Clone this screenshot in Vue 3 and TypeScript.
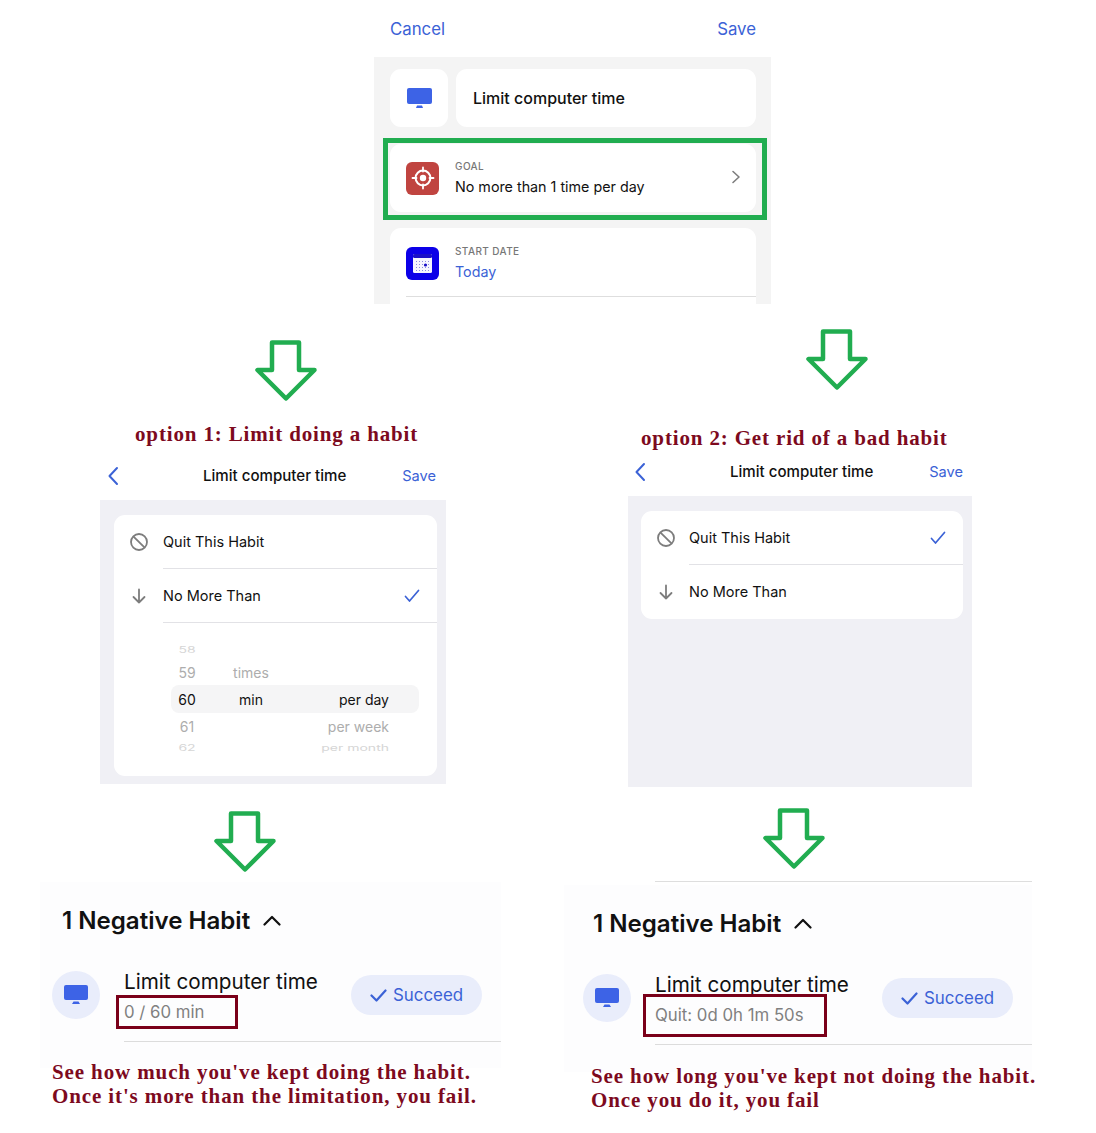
<script setup lang="ts">
// picker rows for option 1
const pickerRows = [
  { num: '58', unit: '', period: '', cls: 'far', h: 20 },
  { num: '59', unit: 'times', period: '', cls: 'near', h: 26 },
  { num: '60', unit: 'min', period: 'per day', cls: 'current', h: 28 },
  { num: '61', unit: '', period: 'per week', cls: 'near', h: 26 },
  { num: '62', unit: '', period: 'per month', cls: 'far', h: 16 },
]

const arrows = ['a1', 'a2', 'a3', 'a4']

const habits = [
  {
    cls: 'habit-1',
    sub: '0 / 60 min',
    caption: ["See how much you've kept doing the habit.", "Once it's more than the limitation, you fail."],
  },
  {
    cls: 'habit-2',
    sub: 'Quit: 0d 0h 1m 50s',
    caption: ["See how long you've kept not doing the habit.", 'Once you do it, you fail'],
  },
]
</script>

<template>
  <div class="canvas">
    <!-- top screenshot -->
    <section class="edit">
      <header class="edit-head">
        <span>Cancel</span>
        <span>Save</span>
      </header>
      <div class="edit-body">
        <div class="name-row">
          <div class="icon-tile">
            <svg width="25" height="20" viewBox="0 0 25 20">
              <rect x="0" y="0" width="25" height="16" rx="2" fill="#3d63e6" />
              <path d="M9 20 L10 17.500 H15 L16 20 Z" fill="#3d63e6" />
            </svg>
          </div>
          <div class="name-card">Limit computer time</div>
        </div>
        <div class="goal-card">
          <div class="tile tile-red">
            <svg width="24" height="24" viewBox="0 0 24 24" fill="none" stroke="#fff">
              <circle cx="12" cy="12" r="7.400" stroke-width="2" />
              <circle cx="12" cy="12" r="3.200" fill="#fff" stroke="none" />
              <path d="M12 1.500 V5.500 M12 18.500 V22.500 M1.500 12 H5.500 M18.500 12 H22.500" stroke-width="1.800" stroke-linecap="round" />
            </svg>
          </div>
          <div class="field">
            <div class="field-label">GOAL</div>
            <div class="field-value">No more than 1 time per day</div>
          </div>
          <svg class="goal-chevron" width="10" height="14" viewBox="0 0 10 14" fill="none">
            <path d="M2 1.500 L8 7 L2 12.500" stroke="#7d7d7d" stroke-width="1.600" stroke-linecap="round" stroke-linejoin="round" />
          </svg>
        </div>
        <div class="date-card">
          <div class="date-row">
            <div class="tile tile-blue">
              <svg width="21" height="21" viewBox="0 0 21 21">
                <rect x="1" y="1" width="19" height="19" rx="1.500" fill="#f6f6ff" />
                <rect x="1" y="1" width="19" height="4" rx="1.500" fill="#1a10c8" />
                <path d="M4 8.500 H18 M4 11.500 H18 M4 14.500 H18 M4 17.500 H18" stroke="#8c8ce0" stroke-width="1" stroke-dasharray="1 2" />
                <circle cx="13.500" cy="12" r="1.600" fill="#1a10c8" />
              </svg>
            </div>
            <div class="field">
              <div class="field-label wide">START DATE</div>
              <div class="field-value blue">Today</div>
            </div>
          </div>
          <div class="date-rule"></div>
        </div>
      </div>
      <div class="goal-mark"></div>
    </section>

    <!-- green arrows -->
    <svg v-for="a in arrows" :key="a" class="arrow" :class="a" width="62" height="61" viewBox="0 0 62 61" fill="none">
      <path d="M17 2.500 H44 V30 H59.500 L31 58.500 L2.500 30 H17 Z" stroke="#21ad50" stroke-width="4.500" stroke-linejoin="round" />
    </svg>

    <h2 class="note head-1">option 1: Limit doing a habit</h2>
    <h2 class="note head-2">option 2: Get rid of a bad habit</h2>

    <!-- option 1 -->
    <section class="option option-1">
      <header class="opt-head">
        <svg width="12" height="20" viewBox="0 0 12 20" fill="none">
          <path d="M10 2 L2.500 10 L10 18" stroke="#3b62d6" stroke-width="2" stroke-linecap="round" stroke-linejoin="round" />
        </svg>
        <span class="opt-title">Limit computer time</span>
        <span class="opt-save">Save</span>
      </header>
      <div class="opt-body">
        <div class="opt-card">
          <div class="opt-row">
            <svg class="opt-icon" width="20" height="20" viewBox="0 0 20 20" fill="none" stroke="#7d7d7d" stroke-width="1.800">
              <circle cx="10" cy="10" r="8" />
              <path d="M4.300 4.300 L15.700 15.700" />
            </svg>
            <div class="opt-main">Quit This Habit</div>
          </div>
          <div class="opt-row">
            <svg class="opt-icon" width="20" height="20" viewBox="0 0 20 20" fill="none" stroke="#7d7d7d" stroke-width="1.800" stroke-linecap="round" stroke-linejoin="round">
              <path d="M10 3.500 V16.500 M4.500 11 L10 16.500 L15.500 11" />
            </svg>
            <div class="opt-main">
              No More Than
              <svg width="16" height="14" viewBox="0 0 16 14" fill="none">
                <path d="M1.500 7.500 L5.500 12 L14.500 1.500" stroke="#3b62d6" stroke-width="1.700" stroke-linecap="round" stroke-linejoin="round" />
              </svg>
            </div>
          </div>
          <div class="picker">
            <div
              v-for="row in pickerRows"
              :key="row.num"
              class="pick-row"
              :class="row.cls"
              :style="{ height: row.h + 'px' }"
            >
              <span class="pick-num">{{ row.num }}</span>
              <span class="pick-unit">{{ row.unit }}</span>
              <span class="pick-period">{{ row.period }}</span>
            </div>
          </div>
        </div>
      </div>
    </section>

    <!-- option 2 -->
    <section class="option option-2">
      <header class="opt-head">
        <svg width="12" height="20" viewBox="0 0 12 20" fill="none">
          <path d="M10 2 L2.500 10 L10 18" stroke="#3b62d6" stroke-width="2" stroke-linecap="round" stroke-linejoin="round" />
        </svg>
        <span class="opt-title">Limit computer time</span>
        <span class="opt-save">Save</span>
      </header>
      <div class="opt-body">
        <div class="opt-card">
          <div class="opt-row">
            <svg class="opt-icon" width="20" height="20" viewBox="0 0 20 20" fill="none" stroke="#7d7d7d" stroke-width="1.800">
              <circle cx="10" cy="10" r="8" />
              <path d="M4.300 4.300 L15.700 15.700" />
            </svg>
            <div class="opt-main">
              Quit This Habit
              <svg width="16" height="14" viewBox="0 0 16 14" fill="none">
                <path d="M1.500 7.500 L5.500 12 L14.500 1.500" stroke="#3b62d6" stroke-width="1.700" stroke-linecap="round" stroke-linejoin="round" />
              </svg>
            </div>
          </div>
          <div class="opt-row last">
            <svg class="opt-icon" width="20" height="20" viewBox="0 0 20 20" fill="none" stroke="#7d7d7d" stroke-width="1.800" stroke-linecap="round" stroke-linejoin="round">
              <path d="M10 3.500 V16.500 M4.500 11 L10 16.500 L15.500 11" />
            </svg>
            <div class="opt-main">No More Than</div>
          </div>
        </div>
      </div>
    </section>

    <!-- habit list results -->
    <template v-for="h in habits" :key="h.cls">
      <section class="habit" :class="h.cls">
        <div class="habit-head">
          1 Negative Habit
          <svg width="18" height="11" viewBox="0 0 18 11" fill="none">
            <path d="M1.500 9.500 L9 2 L16.500 9.500" stroke="#111" stroke-width="2.200" stroke-linecap="round" stroke-linejoin="round" />
          </svg>
        </div>
        <div class="habit-row">
          <div class="habit-icon">
            <svg width="24" height="20" viewBox="0 0 24 20">
              <rect x="0" y="0" width="24" height="15" rx="2" fill="#3d63e6" />
              <path d="M8 19 L9.500 16.500 H14.500 L16 19 Z" fill="#3d63e6" />
            </svg>
          </div>
          <div class="habit-text">
            <div class="habit-title">Limit computer time</div>
            <div class="habit-sub">{{ h.sub }}</div>
          </div>
          <div class="pill">
            <svg width="17" height="13" viewBox="0 0 17 13" fill="none">
              <path d="M1.500 6.500 L6.500 11.500 L15.500 1.500" stroke="#3b62d6" stroke-width="2.200" stroke-linecap="round" stroke-linejoin="round" />
            </svg>
            Succeed
          </div>
        </div>
        <div class="habit-rule"></div>
        <div class="red-box"></div>
      </section>
      <p class="note caption" :class="h.cls + '-cap'">
        <span v-for="line in h.caption" :key="line">{{ line }}</span>
      </p>
    </template>
  </div>
</template>

<style>
html,
body {
  background: #fff;
}
</style>

<style scoped>
.canvas {
  position: relative;
  width: 1096px;
  height: 1133px;
  overflow: hidden;
  background: #fff;
  font-family: Inter, "Liberation Sans", sans-serif;
  color: #111;
}

/* collage pieces */
.edit {
  position: absolute;
  left: 374px;
  top: 0;
  width: 397px;
  height: 304px;
  display: flex;
  flex-direction: column;
}

.edit-head {
  height: 57px;
  padding: 0 15px 0 16px;
  display: flex;
  align-items: center;
  justify-content: space-between;
  font-size: 16.800px;
  color: #3b62d6;
}

.edit-body {
  flex: 1;
  background: #f4f4f4;
  padding: 12px 15px 0 16px;
  display: flex;
  flex-direction: column;
  gap: 16px;
  overflow: hidden;
}

.name-row {
  display: flex;
  gap: 8px;
  height: 58px;
  margin-bottom: 1px;
}

.icon-tile {
  width: 58px;
  background: #fff;
  border-radius: 11px;
  display: flex;
  align-items: center;
  justify-content: center;
}

.name-card {
  flex: 1;
  background: #fff;
  border-radius: 11px;
  padding-left: 17px;
  display: flex;
  align-items: center;
  font-size: 16px;
  font-weight: 500;
}

.goal-card {
  height: 68px;
  background: #fff;
  border-radius: 11px;
  padding: 0 16px;
  display: flex;
  align-items: center;
  gap: 16px;
}

.tile {
  width: 33px;
  height: 33px;
  border-radius: 6px;
  display: flex;
  align-items: center;
  justify-content: center;
  flex: none;
}

.tile-red {
  background: #c04440;
}

.tile-blue {
  background: #0c00e8;
}

.field {
  flex: 1;
  display: flex;
  flex-direction: column;
  gap: 6px;
  margin-top: -1px;
}

.field-label {
  font-size: 10px;
  line-height: 12px;
  font-weight: 500;
  letter-spacing: 0.4px;
  color: #777;
}

.field-label.wide {
  letter-spacing: 0.4px;
}

.field-value {
  font-size: 14.300px;
  line-height: 17px;
  color: #111;
}

.field-value.blue {
  color: #3b62d6;
}

.goal-chevron {
  margin-right: -1px;
  margin-top: -2px;
}

.date-card {
  flex: 1;
  background: #fff;
  border-radius: 11px 11px 0 0;
  padding: 18px 0 0 16px;
}

.date-row {
  display: flex;
  align-items: center;
  gap: 16px;
}

.date-rule {
  margin-top: 16px;
  height: 1px;
  background: #dedede;
}

.goal-mark {
  position: absolute;
  left: 9px;
  top: 138px;
  width: 384px;
  height: 82px;
  box-sizing: border-box;
  border: 5px solid #21ad50;
}

.arrow {
  position: absolute;
}

.a1 { left: 255px; top: 340px; }
.a2 { left: 806px; top: 329px; }
.a3 { left: 214px; top: 811px; }
.a4 { left: 763px; top: 808px; }

.note {
  position: absolute;
  margin: 0;
  font-family: "Liberation Serif", serif;
  font-weight: 700;
  color: #7d0a1e;
  white-space: nowrap;
}

.head-1,
.head-2 {
  font-size: 21px;
  line-height: 24px;
  letter-spacing: 0.85px;
}

.head-1 { left: 135px; top: 422px; }
.head-2 { left: 641px; top: 426px; }

.option {
  position: absolute;
  display: flex;
  flex-direction: column;
}

.option-1 {
  left: 100px;
  top: 455px;
  width: 346px;
  height: 329px;
}

.option-2 {
  left: 628px;
  top: 451px;
  width: 344px;
  height: 336px;
}

.opt-head {
  height: 45px;
  flex: none;
  box-sizing: border-box;
  padding: 0 10px 4px 7px;
  display: flex;
  align-items: center;
  font-size: 14.600px;
}

.option-2 .opt-head {
  padding-left: 6px;
  padding-right: 9px;
}

.opt-title {
  flex: 1;
  text-align: center;
  font-weight: 500;
  font-size: 15.100px;
  padding-left: 28px;
}

.opt-save {
  color: #3b62d6;
}

.opt-body {
  flex: 1;
  background: #f0f0f5;
  padding: 15px 9px 8px 14px;
  display: flex;
  flex-direction: column;
  align-items: flex-start;
}

.option-2 .opt-body {
  padding-left: 13px;
}

.opt-card {
  width: 323px;
  box-sizing: border-box;
  background: #fff;
  border-radius: 11px;
  flex: 1;
  overflow: hidden;
}

.option-2 .opt-card {
  flex: none;
  width: 322px;
  height: 108px;
}

.opt-row {
  display: flex;
  align-items: stretch;
  height: 54px;
  padding-left: 15px;
  gap: 14px;
  font-size: 14.500px;
}

.option-2 .opt-row {
  gap: 13px;
}

.opt-icon {
  align-self: center;
  flex: none;
}

.opt-main {
  flex: 1;
  display: flex;
  align-items: center;
  justify-content: space-between;
  padding-right: 17px;
  border-bottom: 1px solid #e2e2e6;
}

.opt-row.last .opt-main {
  border-bottom: 0;
  padding-bottom: 1px;
}

.picker {
  margin: 16px 18px 0 57px;
}

.pick-row {
  display: flex;
  align-items: center;
  font-size: 14px;
}

.pick-row.current {
  background: #f5f5f6;
  border-radius: 8px;
  color: #111;
}

.pick-row.near {
  color: #adadad;
}

.pick-row.far {
  color: #d6d6d6;
  transform: scaleY(0.62);
}

.pick-num {
  width: 32px;
  text-align: center;
}

.pick-unit {
  width: 96px;
  text-align: center;
}

.pick-period {
  flex: 1;
  text-align: right;
  padding-right: 30px;
}

.habit {
  position: absolute;
  box-sizing: border-box;
  background: #fdfdfe;
  display: flex;
  flex-direction: column;
}

.habit-1 {
  left: 40px;
  top: 882px;
  width: 461px;
  height: 186px;
}

.habit-2 {
  left: 564px;
  top: 885px;
  width: 468px;
  height: 187px;
}

.habit-2::before {
  content: "";
  position: absolute;
  left: 91px;
  right: 0;
  top: -4px;
  height: 1px;
  background: #dedede;
}

.habit-head {
  height: 30px;
  margin: 23px 0 0 22px;
  display: flex;
  align-items: center;
  gap: 13px;
  font-size: 24.100px;
  font-weight: 600;
}

.habit-2 .habit-head {
  margin-left: 29px;
}

.habit-row {
  display: flex;
  align-items: center;
  margin: 36px 0 0 12px;
  height: 48px;
}

.habit-2 .habit-row {
  margin-left: 19px;
}

.habit-icon {
  width: 48px;
  height: 48px;
  border-radius: 50%;
  background: #e9edfb;
  display: flex;
  align-items: center;
  justify-content: center;
  flex: none;
}

.habit-text {
  width: 227px;
  margin-left: 24px;
  align-self: flex-start;
  margin-top: -1px;
}

.habit-title {
  font-size: 20.700px;
  line-height: 24px;
  white-space: nowrap;
}

.habit-sub {
  font-size: 16.800px;
  line-height: 20px;
  margin-top: 8px;
  color: #808080;
  white-space: nowrap;
}

.pill {
  width: 131px;
  height: 40px;
  flex: none;
  box-sizing: border-box;
  border-radius: 20px;
  background: #e9edfb;
  display: flex;
  align-items: center;
  justify-content: center;
  gap: 6px;
  font-size: 16.900px;
  color: #3b62d6;
}

.habit-rule {
  height: 1px;
  margin: 22px 0 0 84px;
  background: #dcdcdc;
}

.habit-2 .habit-rule {
  margin-left: 91px;
}

.red-box {
  position: absolute;
  box-sizing: border-box;
  border: 3px solid #7a0019;
}

.habit-1 .red-box {
  left: 76px;
  top: 113px;
  width: 122px;
  height: 34px;
}

.habit-2 .red-box {
  left: 79px;
  top: 109px;
  width: 184px;
  height: 43px;
}

.caption {
  display: flex;
  flex-direction: column;
  font-size: 21px;
  line-height: 24px;
  letter-spacing: 0.88px;
}

.habit-1-cap { left: 52px; top: 1060px; }
.habit-2-cap { left: 591px; top: 1064px; }
</style>
